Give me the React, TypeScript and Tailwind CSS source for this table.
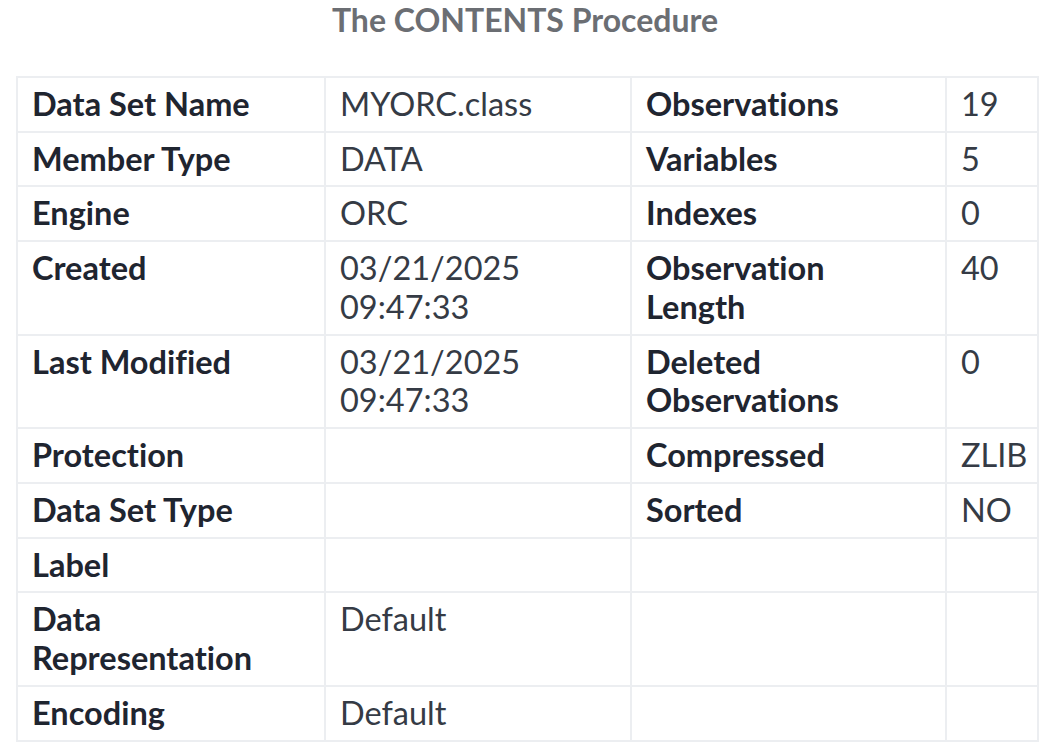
const rows: [string, string, string, string][] = [
  ["Data Set Name", "MYORC.class", "Observations", "19"],
  ["Member Type", "DATA", "Variables", "5"],
  ["Engine", "ORC", "Indexes", "0"],
  ["Created", "03/21/2025\n09:47:33", "Observation\nLength", "40"],
  ["Last Modified", "03/21/2025\n09:47:33", "Deleted\nObservations", "0"],
  ["Protection", "", "Compressed", "ZLIB"],
  ["Data Set Type", "", "Sorted", "NO"],
  ["Label", "", "", ""],
  ["Data\nRepresentation", "Default", "", ""],
  ["Encoding", "Default", "", ""],
];

const cell = "border-2 border-[#eceef1] px-[14px] py-[7px] align-top whitespace-pre-line";

export default function App() {
  return (
    <div className="w-[1044px] h-[751px] bg-white font-['Lato','Liberation_Sans',sans-serif] text-[32.5px] leading-[38.75px] [font-variant-ligatures:none] overflow-hidden">
      <h1 className="text-center font-bold text-[#6b6e73] text-[32px] pt-[1px] pl-[6px]">The CONTENTS Procedure</h1>
      <table className="mt-[36px] ml-[16px] w-[1021px] table-fixed border-collapse">
        <colgroup>
          <col className="w-[308px]" />
          <col className="w-[306px]" />
          <col className="w-[315px]" />
          <col className="w-[92px]" />
        </colgroup>
        <tbody>
          {rows.map(([a, b, c, d]) => (
            <tr key={a}>
              <th className={`${cell} text-left font-bold text-[#1f2530]`}>{a}</th>
              <td className={`${cell} text-[#353b45]`}>{b}</td>
              <th className={`${cell} text-left font-bold text-[#1f2530]`}>{c}</th>
              <td className={`${cell} text-[#353b45]`}>{d}</td>
            </tr>
          ))}
        </tbody>
      </table>
    </div>
  );
}
